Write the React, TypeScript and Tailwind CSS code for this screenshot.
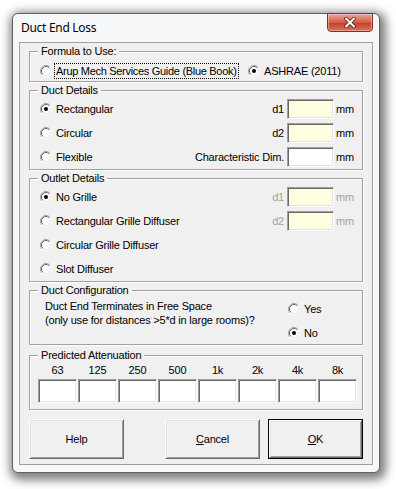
import React from "react";

function Radio({ checked }: { checked?: boolean }) {
  return (
    <svg width="12" height="12" viewBox="0 0 12 12" className="shrink-0 block">
      <circle cx="6" cy="6" r="5" fill="#ffffff" />
      <path d="M2.11 9.89A5.5 5.5 0 0 1 9.89 2.11" stroke="#a0a0a0" fill="none" />
      <path d="M9.89 2.11A5.5 5.5 0 0 1 2.11 9.89" stroke="#ffffff" fill="none" />
      <path d="M2.82 9.18A4.5 4.5 0 0 1 9.18 2.82" stroke="#696969" fill="none" />
      <path d="M9.18 2.82A4.5 4.5 0 0 1 2.82 9.18" stroke="#e3e3e3" fill="none" />
      {checked && <circle cx="6" cy="6" r="2" fill="#000000" />}
    </svg>
  );
}

function Option({ label, checked }: { label: string; checked?: boolean }) {
  return (
    <div className="flex items-center gap-[4px]">
      <Radio checked={checked} />
      <span className="leading-[14px] whitespace-nowrap">{label}</span>
    </div>
  );
}

function TextBox({ yellow, wide }: { yellow?: boolean; wide?: boolean }) {
  return (
    <div
      className={
        wide
          ? "w-[39px] h-[24px] bg-white border border-t-[#a0a0a0] border-l-[#a0a0a0] border-b-white border-r-white shadow-[inset_1px_1px_0_#696969,inset_-1px_-1px_0_#e3e3e3]"
          : yellow
          ? "w-[47px] h-[20px] bg-[#ffffe1] border border-t-[#a0a0a0] border-l-[#a0a0a0] border-b-white border-r-white shadow-[inset_1px_1px_0_#696969,inset_-1px_-1px_0_#e3e3e3]"
          : "w-[47px] h-[20px] bg-white border border-t-[#a0a0a0] border-l-[#a0a0a0] border-b-white border-r-white shadow-[inset_1px_1px_0_#696969,inset_-1px_-1px_0_#e3e3e3]"
      }
    />
  );
}

function Group({ title, children }: { title: string; children: React.ReactNode }) {
  return (
    <fieldset className="min-w-0 border border-[#a0a0a0] shadow-[inset_1px_1px_0_#ffffff,1px_1px_0_#ffffff]">
      <legend className="ml-[8px] px-[3px] leading-[13px] bg-[#f0f0f0]">{title}</legend>
      {children}
    </fieldset>
  );
}

function SizeRow({
  option,
  label,
  yellow,
  disabled,
}: {
  option: React.ReactNode;
  label?: string;
  yellow?: boolean;
  disabled?: boolean;
}) {
  return (
    <div className="h-[20px] flex items-center">
      {option}
      {label && (
        <div className={disabled ? "ml-auto flex items-center text-[#a0a0a0]" : "ml-auto flex items-center"}>
          <span className="mr-[3px] whitespace-nowrap">{label}</span>
          <TextBox yellow={yellow} />
          <span className="ml-[2px] w-[21px]">mm</span>
        </div>
      )}
    </div>
  );
}

function Btn({ children, isDefault }: { children: React.ReactNode; isDefault?: boolean }) {
  const inner =
    "flex-1 flex items-center justify-center bg-[#f0f0f0] border border-t-white border-l-white border-b-[#696969] border-r-[#696969] shadow-[inset_1px_1px_0_#e3e3e3,inset_-1px_-1px_0_#a0a0a0]";
  if (isDefault) {
    return (
      <div className="w-[95px] h-[40px] border border-black flex">
        <div className={inner}>{children}</div>
      </div>
    );
  }
  return (
    <div className="w-[95px] h-[40px] flex">
      <div className={inner}>{children}</div>
    </div>
  );
}

const bands = ["63", "125", "250", "500", "1k", "2k", "4k", "8k"];

export default function App() {
  return (
    <div className="w-[396px] h-[489px] bg-white pt-[13px] pl-[12px] font-['Liberation_Sans',Arial,sans-serif] text-[11px] tracking-[-0.2px] text-black">
      <div className="w-[368px] h-[460px] rounded-[6px] border border-[#626262] bg-[#f7f8fa] shadow-[2px_3px_10px_4px_rgba(0,0,0,0.5)] px-[6px] flex flex-col">
        {/* Title bar */}
        <div className="h-[28px] flex items-start justify-between">
          <div className="h-full flex items-center pl-[2px] font-['Noto_Sans',sans-serif] text-[12px] tracking-[-0.3px]">
            Duct End Loss
          </div>
          <div className="mt-[-1px] w-[46px] h-[19px] rounded-b-[4px] border border-[#7a3326] bg-[linear-gradient(to_bottom,#eaa999,#d45a44_50%,#c0412b_51%,#d9735c)] flex items-center justify-center shadow-[inset_0_0_0_1px_rgba(255,255,255,0.35)]">
            <svg width="14" height="11" viewBox="0 0 14 11">
              <path d="M3 1.5L11 9.5M11 1.5L3 9.5" stroke="#5a1c12" strokeWidth="3.6" strokeLinecap="round" />
              <path d="M3 1.5L11 9.5M11 1.5L3 9.5" stroke="#ffffff" strokeWidth="2" strokeLinecap="round" />
            </svg>
          </div>
        </div>

        {/* Client */}
        <div className="h-[423px] border border-[#a0a0a0] bg-[#f0f0f0] px-[9px] pt-[2px] flex flex-col">
          {/* Formula */}
          <Group title="Formula to Use:">
            <div className="h-[23px] pt-[3px] pl-[10px] flex items-center">
              <div className="flex items-center gap-[2px] w-[200px]">
                <Radio />
                <span className="border border-dotted border-black px-[1px] leading-[14px] whitespace-nowrap tracking-[-0.3px]">
                  Arup Mech Services Guide (Blue Book)
                </span>
              </div>
              <div className="ml-[8px]">
                <Option checked label="ASHRAE (2011)" />
              </div>
            </div>
          </Group>

          {/* Duct details */}
          <div className="mt-[2px]">
            <Group title="Duct Details">
              <div className="pt-[2px] pb-[2px] pl-[10px] pr-[5px] flex flex-col gap-[4px]">
                <SizeRow option={<Option checked label="Rectangular" />} label="d1" yellow />
                <SizeRow option={<Option label="Circular" />} label="d2" yellow />
                <SizeRow option={<Option label="Flexible" />} label="Characteristic Dim." />
              </div>
            </Group>
          </div>

          {/* Outlet details */}
          <div className="mt-[2px]">
            <Group title="Outlet Details">
              <div className="pt-[2px] pb-[2px] pl-[10px] pr-[5px] flex flex-col gap-[4px]">
                <SizeRow option={<Option checked label="No Grille" />} label="d1" yellow disabled />
                <SizeRow option={<Option label="Rectangular Grille Diffuser" />} label="d2" yellow disabled />
                <SizeRow option={<Option label="Circular Grille Diffuser" />} />
                <SizeRow option={<Option label="Slot Diffuser" />} />
              </div>
            </Group>
          </div>

          {/* Duct configuration */}
          <div className="mt-[2px]">
            <Group title="Duct Configuration">
              <div className="h-[47px] flex">
                <div className="w-[258px] pl-[15px] pt-[2px] leading-[14px]">
                  <div className="whitespace-nowrap">Duct End Terminates in Free Space</div>
                  <div className="whitespace-nowrap">(only use for distances &gt;5*d in large rooms)?</div>
                </div>
                <div className="pt-[2px] flex flex-col gap-[4px]">
                  <div className="h-[20px] flex items-center">
                    <Option label="Yes" />
                  </div>
                  <div className="h-[20px] flex items-center">
                    <Option checked label="No" />
                  </div>
                </div>
              </div>
            </Group>
          </div>

          {/* Predicted attenuation */}
          <div className="mt-[4px]">
            <Group title="Predicted Attenuation">
              <div className="h-[47px] pl-[8px] pt-[1px]">
                <div className="flex gap-[1px] h-[14px] leading-[14px]">
                  {bands.map((b) => (
                    <div key={b} className="w-[39px] text-center">
                      {b}
                    </div>
                  ))}
                </div>
                <div className="flex gap-[1px] mt-[2px]">
                  {bands.map((b) => (
                    <TextBox key={b} wide />
                  ))}
                </div>
              </div>
            </Group>
          </div>

          {/* Buttons */}
          <div className="mt-[9px] flex">
            <Btn>Help</Btn>
            <div className="ml-auto flex gap-[8px]">
              <Btn>
                <span>
                  <span className="underline">C</span>ancel
                </span>
              </Btn>
              <Btn isDefault>
                <span>
                  <span className="underline">O</span>K
                </span>
              </Btn>
            </div>
          </div>
        </div>
      </div>
    </div>
  );
}
